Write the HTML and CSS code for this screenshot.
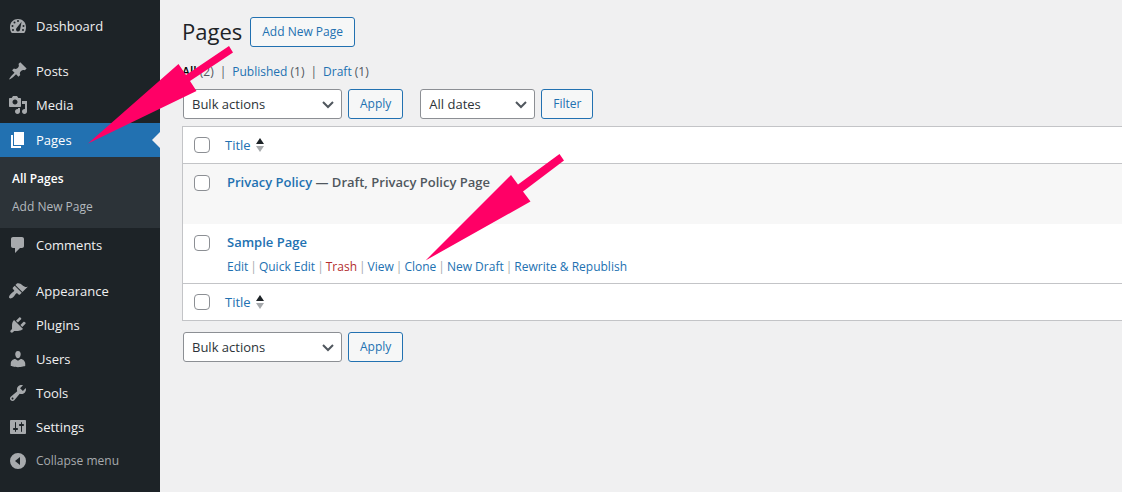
FILE: index.html
```html
<!DOCTYPE html>
<html lang="en">
<head>
<meta charset="utf-8">
<title>Pages</title>
<link rel="stylesheet" href="styles.css">
</head>
<body>
<div class="admin">
  <nav class="sidebar" aria-label="Main menu">
    <ul class="menu">
      <li><a class="item" href="#"><svg class="icon" viewBox="0 0 20 20"><path fill-rule="evenodd" d="M3.8 17h12.4c1.4-1.6 1.8-3.9 1.8-6 0-5-3.600-8-8-8s-8 3-8 8c0 2.100.4 4.400 1.800 6zM9 5a1 1 0 1 0 2 0a1 1 0 1 0-2 0zM5.500 6.500a1 1 0 1 0 2 0a1 1 0 1 0-2 0zM3.500 10a1 1 0 1 0 2 0a1 1 0 1 0-2 0zM14.500 10a1 1 0 1 0 2 0a1 1 0 1 0-2 0zM4 14a1 1 0 1 0 2 0a1 1 0 1 0-2 0zM14 14a1 1 0 1 0 2 0a1 1 0 1 0-2 0zM13.600 5.700l-1.500 7.700c-.2 1.200-1 2-2.100 2a2 2 0 0 1-1.400-3.400z"/></svg><span>Dashboard</span></a></li>
      <li class="group-start"><a class="item" href="#"><svg class="icon" viewBox="0 0 20 20"><path d="M10.440 3.020l1.820-1.820 6.360 6.350-1.830 1.820c-1.050-.68-2.480-.57-3.410.36l-.75.75c-.92.93-1.040 2.350-.35 3.410l-1.830 1.820-2.410-2.410-2.800 2.790c-.42.42-3.380 2.710-3.800 2.290s1.860-3.390 2.280-3.810l2.790-2.790L4.100 9.360l1.830-1.820c1.050.69 2.480.57 3.400-.36l.75-.75c.93-.92 1.050-2.350.36-3.410z"/></svg><span>Posts</span></a></li>
      <li><a class="item" href="#"><svg class="icon" viewBox="0 0 20 20"><path d="M13 11V4c0-.55-.45-1-1-1h-1.670L9 1H5L3.670 3H2c-.55 0-1 .45-1 1v7c0 .55.45 1 1 1h10c.55 0 1-.45 1-1zM7 4.500c1.380 0 2.500 1.120 2.500 2.500S8.380 9.500 7 9.500 4.500 8.380 4.500 7 5.620 4.500 7 4.500zM14 6h5v10.500c0 1.380-1.120 2.500-2.500 2.500S14 17.880 14 16.500s1.120-2.500 2.500-2.500c.17 0 .34.02.5.05V9h-3V6zm-4 8.050V13h2v3.500c0 1.380-1.120 2.500-2.500 2.500S7 17.880 7 16.500 8.120 14 9.500 14c.17 0 .34.02.5.05z"/></svg><span>Media</span></a></li>
      <li class="current">
        <a class="item" href="#" aria-current="page"><svg class="icon" viewBox="0 0 20 20"><path d="M6 15V2h10v13H6zm-1 1h8v2H3V5h2v11z"/></svg><span>Pages</span></a>
        <ul class="submenu">
          <li><a class="active" href="#">All Pages</a></li>
          <li><a href="#">Add New Page</a></li>
        </ul>
      </li>
      <li><a class="item" href="#"><svg class="icon" viewBox="0 0 20 20"><path d="M5 2h9c1.100 0 2 .9 2 2v7c0 1.100-.9 2-2 2h-2l-5 5v-5H5c-1.100 0-2-.9-2-2V4c0-1.100.9-2 2-2z"/></svg><span>Comments</span></a></li>
      <li class="group-start site"><a class="item" href="#"><svg class="icon" viewBox="0 0 20 20"><path d="M14.480 11.060L7.410 3.990l1.500-1.500c.5-.56 2.300-.47 3.510.32 1.210.8 1.430 1.280 2.910 2.100 1.180.64 2.450 1.260 4.450.85zm-.71.71L6.700 4.700 4.930 6.470c-.39.39-.39 1.020 0 1.410l1.060 1.060c.39.39.39 1.030 0 1.420-.6.6-1.430 1.110-2.210 1.690-.35.26-.7.53-1.010.84C1.430 14.230.4 16.080 1.400 17.070c.99 1 2.840-.03 4.180-1.360.31-.31.58-.66.85-1.020.57-.78 1.080-1.610 1.690-2.210.39-.39 1.020-.39 1.410 0l1.060 1.060c.39.39 1.020.39 1.410 0z"/></svg><span>Appearance</span></a></li>
      <li><a class="item" href="#"><svg class="icon" viewBox="0 0 20 20"><path d="M13.110 4.360L9.870 7.600 8 5.730l3.240-3.240c.35-.34 1.050-.2 1.560.32.52.51.66 1.210.31 1.550zm-8 1.770l.91-1.120 9.010 9.010-1.190.84c-.71.71-2.630 1.160-3.820 1.160H6.140L4.900 17.260c-.59.59-1.540.59-2.120 0-.59-.58-.59-1.530 0-2.120l1.240-1.240v-3.880c0-1.130.4-3.190 1.090-3.890zm7.260 3.970l3.240-3.240c.34-.35 1.040-.21 1.550.31.52.51.66 1.210.31 1.550l-3.240 3.250z"/></svg><span>Plugins</span></a></li>
      <li><a class="item" href="#"><svg class="icon" viewBox="0 0 20 20"><path d="M10 9.250c-2.270 0-2.730-3.440-2.730-3.440C7 4.020 7.820 2 9.970 2c2.160 0 2.980 2.020 2.710 3.810 0 0-.41 3.440-2.680 3.440zm0 2.570L12.720 10c2.390 0 4.520 2.330 4.520 4.530v2.490s-3.650 1.130-7.240 1.130c-3.650 0-7.240-1.130-7.240-1.130v-2.490c0-2.250 1.940-4.480 4.470-4.480z"/></svg><span>Users</span></a></li>
      <li><a class="item" href="#"><svg class="icon" viewBox="0 0 20 20"><path d="M16.680 9.770c-1.340 1.340-3.300 1.670-4.950.99l-5.410 6.520c-.99.99-2.590.99-3.580 0s-.99-2.590 0-3.570l6.520-5.420c-.68-1.650-.35-3.610.99-4.950 1.280-1.280 3.120-1.620 4.720-1.060l-2.890 2.890 2.820 2.820 2.860-2.870c.53 1.580.18 3.390-1.080 4.650zM3.810 16.210c.4.39 1.040.39 1.430 0 .4-.4.4-1.040 0-1.430-.39-.4-1.030-.4-1.430 0-.39.39-.39 1.030 0 1.430z"/></svg><span>Tools</span></a></li>
      <li><a class="item" href="#"><svg class="icon" viewBox="0 0 20 20"><path d="M18 16V4c0-.55-.45-1-1-1H3c-.55 0-1 .45-1 1v12c0 .55.45 1 1 1h14c.55 0 1-.45 1-1zM8 11h1c.55 0 1 .45 1 1s-.45 1-1 1H8v1.500c0 .28-.22.5-.5.5s-.5-.22-.5-.5V13H6c-.55 0-1-.45-1-1s.45-1 1-1h1V5.500c0-.28.22-.5.5-.5s.5.22.5.5V11zm5-2h-1c-.55 0-1-.45-1-1s.45-1 1-1h1V5.500c0-.28.22-.5.5-.5s.5.22.5.5V7h1c.55 0 1 .45 1 1s-.45 1-1 1h-1v5.500c0 .28-.22.5-.5.5s-.5-.22-.5-.5V9z"/></svg><span>Settings</span></a></li>
      <li><button class="item collapse" type="button"><svg class="icon" viewBox="0 0 20 20"><path fill-rule="evenodd" d="M2 10a8 8 0 1 0 16 0a8 8 0 1 0-16 0zM12 6v8l-5-4z"/></svg><span>Collapse menu</span></button></li>
    </ul>
  </nav>

  <main class="content">
    <header class="heading">
      <h1>Pages</h1>
      <a class="button" href="#">Add New Page</a>
    </header>
    <ul class="views">
      <li><a class="active" href="#">All</a> (2)</li>
      <li><a href="#">Published</a> (1)</li>
      <li><a href="#">Draft</a> (1)</li>
    </ul>
    <div class="toolbar">
      <div class="actions">
        <span class="picker bulk"><select aria-label="Select bulk action"><option>Bulk actions</option></select><svg class="chevron" viewBox="0 0 12 8"><path d="M1 1l5 5 5-5"/></svg></span>
        <button class="button" type="button">Apply</button>
      </div>
      <div class="actions">
        <span class="picker dates"><select aria-label="Filter by date"><option>All dates</option></select><svg class="chevron" viewBox="0 0 12 8"><path d="M1 1l5 5 5-5"/></svg></span>
        <button class="button" type="button">Filter</button>
      </div>
    </div>
    <table class="pages">
      <thead>
        <tr>
          <td class="check"><input type="checkbox" aria-label="Select all"></td>
          <th scope="col"><a class="sort" href="#">Title <svg class="arrows" viewBox="0 0 8 14"><path class="up" d="M4 0l4 6H0z"/><path class="down" d="M4 14l4-6H0z"/></svg></a></th>
        </tr>
      </thead>
      <tbody>
        <tr class="alternate">
          <td class="check"><input type="checkbox" aria-label="Select Privacy Policy"></td>
          <td class="title"><strong><a href="#">Privacy Policy</a> — Draft, Privacy Policy Page</strong></td>
        </tr>
        <tr>
          <td class="check"><input type="checkbox" aria-label="Select Sample Page"></td>
          <td class="title">
            <strong><a href="#">Sample Page</a></strong>
            <ul class="row-actions">
              <li><a href="#">Edit</a></li>
              <li><a href="#">Quick Edit</a></li>
              <li><a class="trash" href="#">Trash</a></li>
              <li><a href="#">View</a></li>
              <li><a href="#">Clone</a></li>
              <li><a href="#">New Draft</a></li>
              <li><a href="#">Rewrite &amp; Republish</a></li>
            </ul>
          </td>
        </tr>
      </tbody>
      <tfoot>
        <tr>
          <td class="check"><input type="checkbox" aria-label="Select all"></td>
          <th scope="col"><a class="sort" href="#">Title <svg class="arrows" viewBox="0 0 8 14"><path class="up" d="M4 0l4 6H0z"/><path class="down" d="M4 14l4-6H0z"/></svg></a></th>
        </tr>
      </tfoot>
    </table>
    <div class="toolbar">
      <div class="actions">
        <span class="picker bulk"><select aria-label="Select bulk action"><option>Bulk actions</option></select><svg class="chevron" viewBox="0 0 12 8"><path d="M1 1l5 5 5-5"/></svg></span>
        <button class="button" type="button">Apply</button>
      </div>
    </div>
  </main>
  <svg class="pointers" width="600" height="280" viewBox="0 0 600 280" aria-hidden="true">
    <path d="M88 143.500L178.500 64l7.500 11L229 46l4 6.500L190 81l6.500 10z"/>
    <path d="M425.500 260.500L511 175l7 9.500L559.500 154l4.500 6.500L523 191.500l7.500 10z"/>
  </svg>
</div>
</body>
</html>
```

FILE: styles.css
```css
* {
  box-sizing: border-box;
}

body {
  margin: 0;
  background: #f0f0f1;
  color: #3c434a;
  font: 12px/18px "Open Sans", "Noto Sans", sans-serif;
}

ul {
  list-style: none;
  margin: 0;
  padding: 0;
}

a {
  color: #2271b1;
  text-decoration: none;
}

.admin {
  position: relative;
  display: flex;
  min-height: 100vh;
  overflow: hidden;
}

/* Sidebar */
.sidebar {
  flex: 0 0 160px;
  padding-top: 9px;
  background: #1d2327;
}

.item {
  display: flex;
  align-items: center;
  gap: 8px;
  width: 100%;
  height: 34px;
  padding: 0 8px;
  color: #f0f0f1;
  font-size: 13px;
}

.icon {
  flex: none;
  width: 20px;
  height: 20px;
  fill: #a7aaad;
}

.group-start {
  margin-top: 11px;
}

.group-start.site {
  margin-top: 12px;
}

.current {
  margin-top: 1px;
}

.current > .item {
  position: relative;
  background: #2271b1;
  color: #fff;
}

.current > .item::after {
  content: "";
  position: absolute;
  right: 0;
  top: 9px;
  border: 8px solid transparent;
  border-left-width: 0;
  border-right-color: #f0f0f1;
}

.current .icon {
  fill: #fff;
}

.submenu {
  padding: 8px 0 7px;
  background: #2c3338;
}

.submenu a {
  display: block;
  padding: 5px 12px;
  color: #b4b9be;
}

.submenu .active {
  color: #fff;
  font-weight: 600;
}

.collapse {
  border: 0;
  background: none;
  color: #a7aaad;
  font: inherit;
}

/* Page list */
.content {
  flex: 1;
  min-width: 0;
  padding: 17px 0 0 22px;
}

.heading {
  display: flex;
  align-items: flex-start;
  gap: 8px;
}

h1 {
  margin: 0;
  color: #1d2327;
  font-size: 22px;
  font-weight: 400;
  line-height: 28px;
}

.button {
  height: 30px;
  padding: 0 11px;
  border: 1px solid #2271b1;
  border-radius: 3px;
  background: #f6f7f7;
  color: #2271b1;
  font: inherit;
  line-height: 28px;
}

.views {
  display: flex;
  margin: 16px 0 8px;
  color: #50575e;
}

.views li + li::before {
  content: "|";
  margin: 0 6px;
}

.views .active {
  color: #000;
  font-weight: 600;
}

.toolbar {
  display: flex;
  gap: 17px;
  padding-left: 1px;
}

.actions {
  display: flex;
  gap: 6px;
}

.picker {
  position: relative;
}

.bulk {
  width: 159px;
}

.dates {
  width: 115px;
}

select {
  appearance: none;
  width: 100%;
  height: 30px;
  padding: 0 24px 0 8px;
  border: 1px solid #8c8f94;
  border-radius: 3px;
  background: #fff;
  color: #2c3338;
  font: inherit;
  font-size: 13px;
}

.chevron {
  position: absolute;
  right: 8px;
  top: 12px;
  width: 12px;
  height: 8px;
  fill: none;
  stroke: #50575e;
  stroke-width: 2;
  pointer-events: none;
}

.pages {
  width: 100%;
  margin: 7px 0 11px;
  border: 1px solid #c3c4c7;
  border-right: 0;
  border-spacing: 0;
  background: #fff;
}

.pages td,
.pages th {
  padding: 0;
  text-align: left;
  font-weight: 400;
  vertical-align: top;
}

thead td,
thead th {
  border-bottom: 1px solid #c3c4c7;
}

tfoot td,
tfoot th {
  border-top: 1px solid #c3c4c7;
}

.pages .check {
  width: 42px;
  padding: 10px 0 10px 11px;
}

.pages tbody .check {
  padding-top: 11px;
}

.pages .title {
  padding: 9px 2px 7px;
}

.alternate {
  height: 60px;
  background: #f7f7f7;
}

input[type="checkbox"] {
  appearance: none;
  display: block;
  width: 16px;
  height: 16px;
  margin: 0;
  border: 1px solid #8c8f94;
  border-radius: 4px;
  background: #fff;
}

.sort {
  display: flex;
  align-items: center;
  gap: 5px;
  padding: 9px 0;
  font-size: 13px;
}

.arrows {
  width: 8px;
  height: 14px;
}

.up {
  fill: #1d2327;
}

.down {
  fill: #a7aaad;
}

strong {
  display: block;
  color: #50575e;
  font-size: 13px;
  font-weight: 600;
}

.row-actions {
  display: flex;
  padding-top: 7px;
  color: #a7aaad;
}

.row-actions li + li::before {
  content: "|";
  margin: 0 2px;
}

.row-actions .trash {
  color: #b32d2e;
}

/* Pointers drawn over the page */
.pointers {
  position: absolute;
  left: 0;
  top: 0;
  fill: #ff0066;
  pointer-events: none;
}
```
